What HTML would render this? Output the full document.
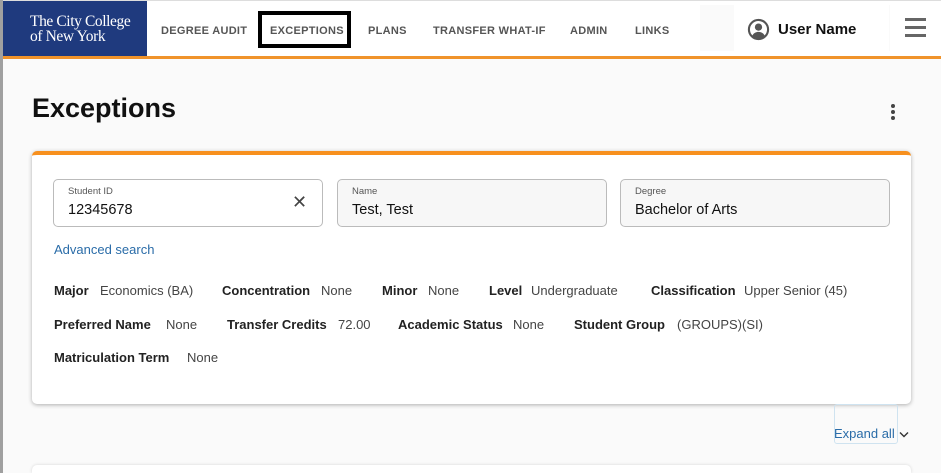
<!DOCTYPE html>
<html style="width:941px;height:473px;overflow:hidden"><head><style>
*{margin:0;padding:0;box-sizing:border-box}
body{width:941px;height:473px;overflow:hidden;background:#fafafa;font-family:"Liberation Sans","DejaVu Sans",sans-serif;position:relative;color:#222}
.abs{position:absolute}
.strip{left:0;top:0;width:3px;height:473px;background:#a0a0a0}
.top{left:3px;top:0;width:938px;height:1px;background:#ddd}
.hdr{left:3px;top:1px;width:938px;height:55px;background:#fff}
.orange{left:3px;top:56px;width:938px;height:3px;background:#f0932b}
.logo{left:3px;top:1px;width:144px;height:55px;background:#1f3a7e;color:#fff;font-family:"Liberation Serif",serif;font-size:15.5px;line-height:15px;padding:13px 0 0 27px;letter-spacing:-0.4px}
.nav{top:25px;font-size:11px;font-weight:bold;color:#555;letter-spacing:.3px}
.box{left:258px;top:11px;width:93px;height:37px;border:4px solid #000}
.user{left:734px;top:5px;width:155px;height:46px;background:#fff}
.userbg{left:700px;top:5px;width:190px;height:46px;background:#fafafa}
h1{position:absolute;left:32px;top:93px;font-size:27px;font-weight:bold;color:#111}
.card{left:32px;top:151px;width:879px;height:253px;background:#fff;border-top:4px solid #f7901e;border-radius:5px;box-shadow:0 1px 4px rgba(0,0,0,.3)}
.fld{top:179px;width:270px;height:48px;border:1px solid #bbb;border-radius:5px;background:#fff}
.fld .l{position:absolute;left:14px;top:6px;font-size:9.5px;color:#555}
.fld .v{position:absolute;left:14px;top:22px;font-size:14.5px;color:#111}
.fld.g{background:#f7f7f7}
.lnk{color:#2a6ca8}
.k{font-size:13px;font-weight:bold;color:#222}
.vv{font-size:13px;color:#444}
.card2{left:32px;top:465px;width:879px;height:8px;background:#fff;border-radius:5px 5px 0 0;box-shadow:0 0 3px rgba(0,0,0,.15)}
</style></head><body>
<div class="abs strip"></div><div class="abs top"></div>
<div class="abs hdr"></div>
<div class="abs logo">The City College<br>of New York</div>
<div class="abs nav" style="left:161px">DEGREE AUDIT</div>
<div class="abs nav" style="left:270px">EXCEPTIONS</div>
<div class="abs box"></div>
<div class="abs nav" style="left:368px">PLANS</div>
<div class="abs nav" style="left:433px">TRANSFER WHAT-IF</div>
<div class="abs nav" style="left:570px">ADMIN</div>
<div class="abs nav" style="left:635px">LINKS</div>
<div class="abs userbg"></div><div class="abs user"></div>
<svg class="abs" style="left:747px;top:18px" width="23" height="23" viewBox="0 0 24 24"><circle cx="12" cy="12" r="10" fill="none" stroke="#555" stroke-width="2.2"/><circle cx="12" cy="9.5" r="3.8" fill="#555"/><path d="M5.5 18.5c1.5-3 4-4 6.5-4s5 1 6.5 4c-2 2-4 3-6.5 3s-4.5-1-6.5-3z" fill="#555"/></svg>
<div class="abs" style="left:778px;top:21px;font-size:15px;font-weight:bold;color:#111">User Name</div>
<div class="abs" style="left:905px;top:18px;width:21px;height:3px;background:#666;box-shadow:0 8px 0 #666,0 16px 0 #666"></div>
<div class="abs orange"></div>
<h1>Exceptions</h1>
<div class="abs" style="left:891px;top:104px;width:4px;height:4px;border-radius:50%;background:#444;box-shadow:0 6px 0 #444,0 12px 0 #444"></div>
<div class="abs card"></div>
<div class="abs fld" style="left:53px"><div class="l">Student ID</div><div class="v">12345678</div><div style="position:absolute;left:238px;top:12px;font-size:18px;color:#444">✕</div></div>
<div class="abs fld g" style="left:337px"><div class="l">Name</div><div class="v">Test, Test</div></div>
<div class="abs fld g" style="left:620px"><div class="l">Degree</div><div class="v">Bachelor of Arts</div></div>
<div class="abs lnk" style="left:54px;top:242px;font-size:13px">Advanced search</div>
<div class="abs k" style="left:54px;top:283px">Major</div><div class="abs vv" style="left:100px;top:283px">Economics (BA)</div>
<div class="abs k" style="left:222px;top:283px">Concentration</div><div class="abs vv" style="left:321px;top:283px">None</div>
<div class="abs k" style="left:382px;top:283px">Minor</div><div class="abs vv" style="left:428px;top:283px">None</div>
<div class="abs k" style="left:489px;top:283px">Level</div><div class="abs vv" style="left:531px;top:283px">Undergraduate</div>
<div class="abs k" style="left:651px;top:283px">Classification</div><div class="abs vv" style="left:744px;top:283px">Upper Senior (45)</div>
<div class="abs k" style="left:54px;top:317px">Preferred Name</div><div class="abs vv" style="left:166px;top:317px">None</div>
<div class="abs k" style="left:227px;top:317px">Transfer Credits</div><div class="abs vv" style="left:338px;top:317px">72.00</div>
<div class="abs k" style="left:398px;top:317px">Academic Status</div><div class="abs vv" style="left:513px;top:317px">None</div>
<div class="abs k" style="left:574px;top:317px">Student Group</div><div class="abs vv" style="left:677px;top:317px">(GROUPS)(SI)</div>
<div class="abs k" style="left:54px;top:350px">Matriculation Term</div><div class="abs vv" style="left:187px;top:350px">None</div>
<div class="abs" style="left:834px;top:404px;width:64px;height:40px;border:1px solid #cfe3f0;border-radius:3px"></div>
<div class="abs lnk" style="left:834px;top:426px;font-size:13px">Expand all</div>
<svg class="abs" style="left:899px;top:431px" width="10" height="7" viewBox="0 0 10 7"><path d="M1 1.5l4 4 4-4" fill="none" stroke="#333" stroke-width="1.4"/></svg>
<div class="abs card2"></div>
</body></html>
